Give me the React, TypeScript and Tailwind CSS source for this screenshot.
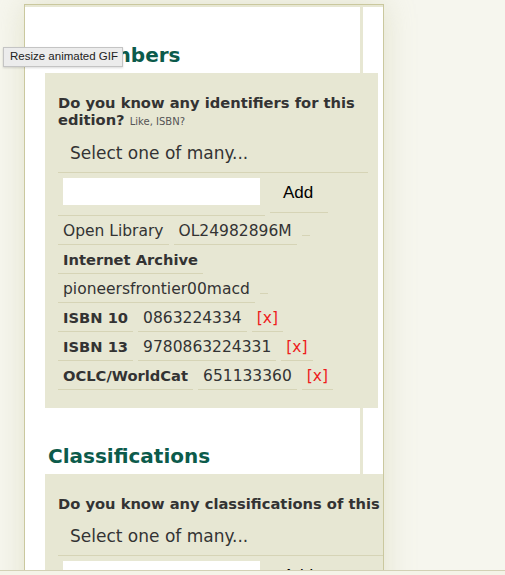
import React from 'react';

type CellData = { text?: string; bold?: boolean; remove?: boolean };

const rule = 'border-b border-[#d6d4b6]';

const identifiers: CellData[][] = [
  [{ text: 'Open Library' }, { text: 'OL24982896M' }, {}],
  [{ text: 'Internet Archive', bold: true }],
  [{ text: 'pioneersfrontier00macd' }, {}],
  [{ text: 'ISBN 10', bold: true }, { text: '0863224334' }, { text: '[x]', remove: true }],
  [{ text: 'ISBN 13', bold: true }, { text: '9780863224331' }, { text: '[x]', remove: true }],
  [{ text: 'OCLC/WorldCat', bold: true }, { text: '651133360' }, { text: '[x]', remove: true }],
];

const Cell: React.FC<CellData> = ({ text, bold, remove }) => {
  if (!text) return <div className={`w-[8px] ${rule}`} />;
  return (
    <div
      className={`px-[5px] pt-[5px] pb-[3px] leading-[20px] ${rule} ${
        bold ? 'font-bold text-[14.7px]' : 'text-[15.5px]'
      } ${remove ? 'text-[#ee1c1c]' : 'text-[#333]'}`}
    >
      {text}
    </div>
  );
};

const AddRow: React.FC = () => (
  <div className="flex items-start gap-[5px]">
    <div className={`px-[5px] pt-[5px] pb-[10px] ${rule}`}>
      <input type="text" className="block h-[27px] w-[197px] bg-white outline-none" />
    </div>
    <button
      className={`pl-[13px] pr-[15px] pt-[10px] pb-[9px] leading-[20px] text-[17px] text-black font-['Liberation_Sans',sans-serif] ${rule}`}
    >
      Add
    </button>
  </div>
);

interface PanelProps {
  question: string;
  note: string;
  wide?: boolean;
  rows?: CellData[][];
}

const Panel: React.FC<PanelProps> = ({ question, note, wide, rows = [] }) => (
  <div
    className={`-ml-[3px] bg-[#e7e7d3] pl-[13px] pr-[10px] pt-[21px] pb-[18px] ${
      wide ? 'w-[440px]' : 'w-[333px]'
    }`}
  >
    <p
      className={`font-bold text-[14.7px] leading-[17px] text-[#333] ${
        wide ? 'whitespace-nowrap' : ''
      }`}
    >
      {question} <span className="font-normal text-[10px] text-[#555]">{note}</span>
    </p>
    <div
      className={`pl-[12px] pb-[9px] text-[17px] leading-[20px] text-[#333] ${rule} ${
        wide ? 'mt-[12px]' : 'mt-[13px]'
      }`}
    >
      Select one of many...
    </div>
    <AddRow />
    {rows.map((row, i) => (
      <div key={i} className="flex items-baseline gap-[5px]">
        {row.map((cell, j) => (
          <Cell key={j} {...cell} />
        ))}
      </div>
    ))}
  </div>
);

const Heading: React.FC<{ children: React.ReactNode }> = ({ children }) => (
  <h2 className="mt-[36px] mb-[6px] text-[20px] leading-[24px] font-bold text-[#0c5b4b]">
    {children}
  </h2>
);

export default function App() {
  return (
    <div className="relative h-[575px] overflow-hidden bg-[#f6f6ee] font-['DejaVu_Sans',sans-serif]">
      <div className="ml-[24px] mt-[4px] w-[360px] min-h-[600px] overflow-hidden border-x border-t border-[#cac89e] bg-[linear-gradient(to_right,#fff_335px,#e7e7d3_335px,#e7e7d3_338px,#fff_338px)] shadow-[0_0_28px_rgba(190,190,140,0.35)]">
        <div className="h-[2px] bg-[#e7e7d3]" />
        <div className="pl-[23px]">
          <Heading>ID Numbers</Heading>
          <Panel
            question="Do you know any identifiers for this edition?"
            note="Like, ISBN?"
            rows={identifiers}
          />
          <Heading>Classifications</Heading>
          <Panel
            question="Do you know any classifications of this edition?"
            note="Like, DDC?"
            wide
          />
        </div>
      </div>

      {/* browser tooltip */}
      <div className="absolute left-[3px] top-[47px] flex h-[20px] w-[120px] items-center border border-[#c4c4c4] bg-[#ececec] pl-[6px] text-[11.5px] text-[#222] shadow-[0_1px_2px_rgba(0,0,0,0.15)] font-['Liberation_Sans',sans-serif]">
        Resize animated GIF
      </div>

      {/* window bottom edge */}
      <div className="absolute bottom-0 left-0 right-0 h-[5px] border-t border-[#d3d1b5] bg-[#f4f4e8]" />
    </div>
  );
}
